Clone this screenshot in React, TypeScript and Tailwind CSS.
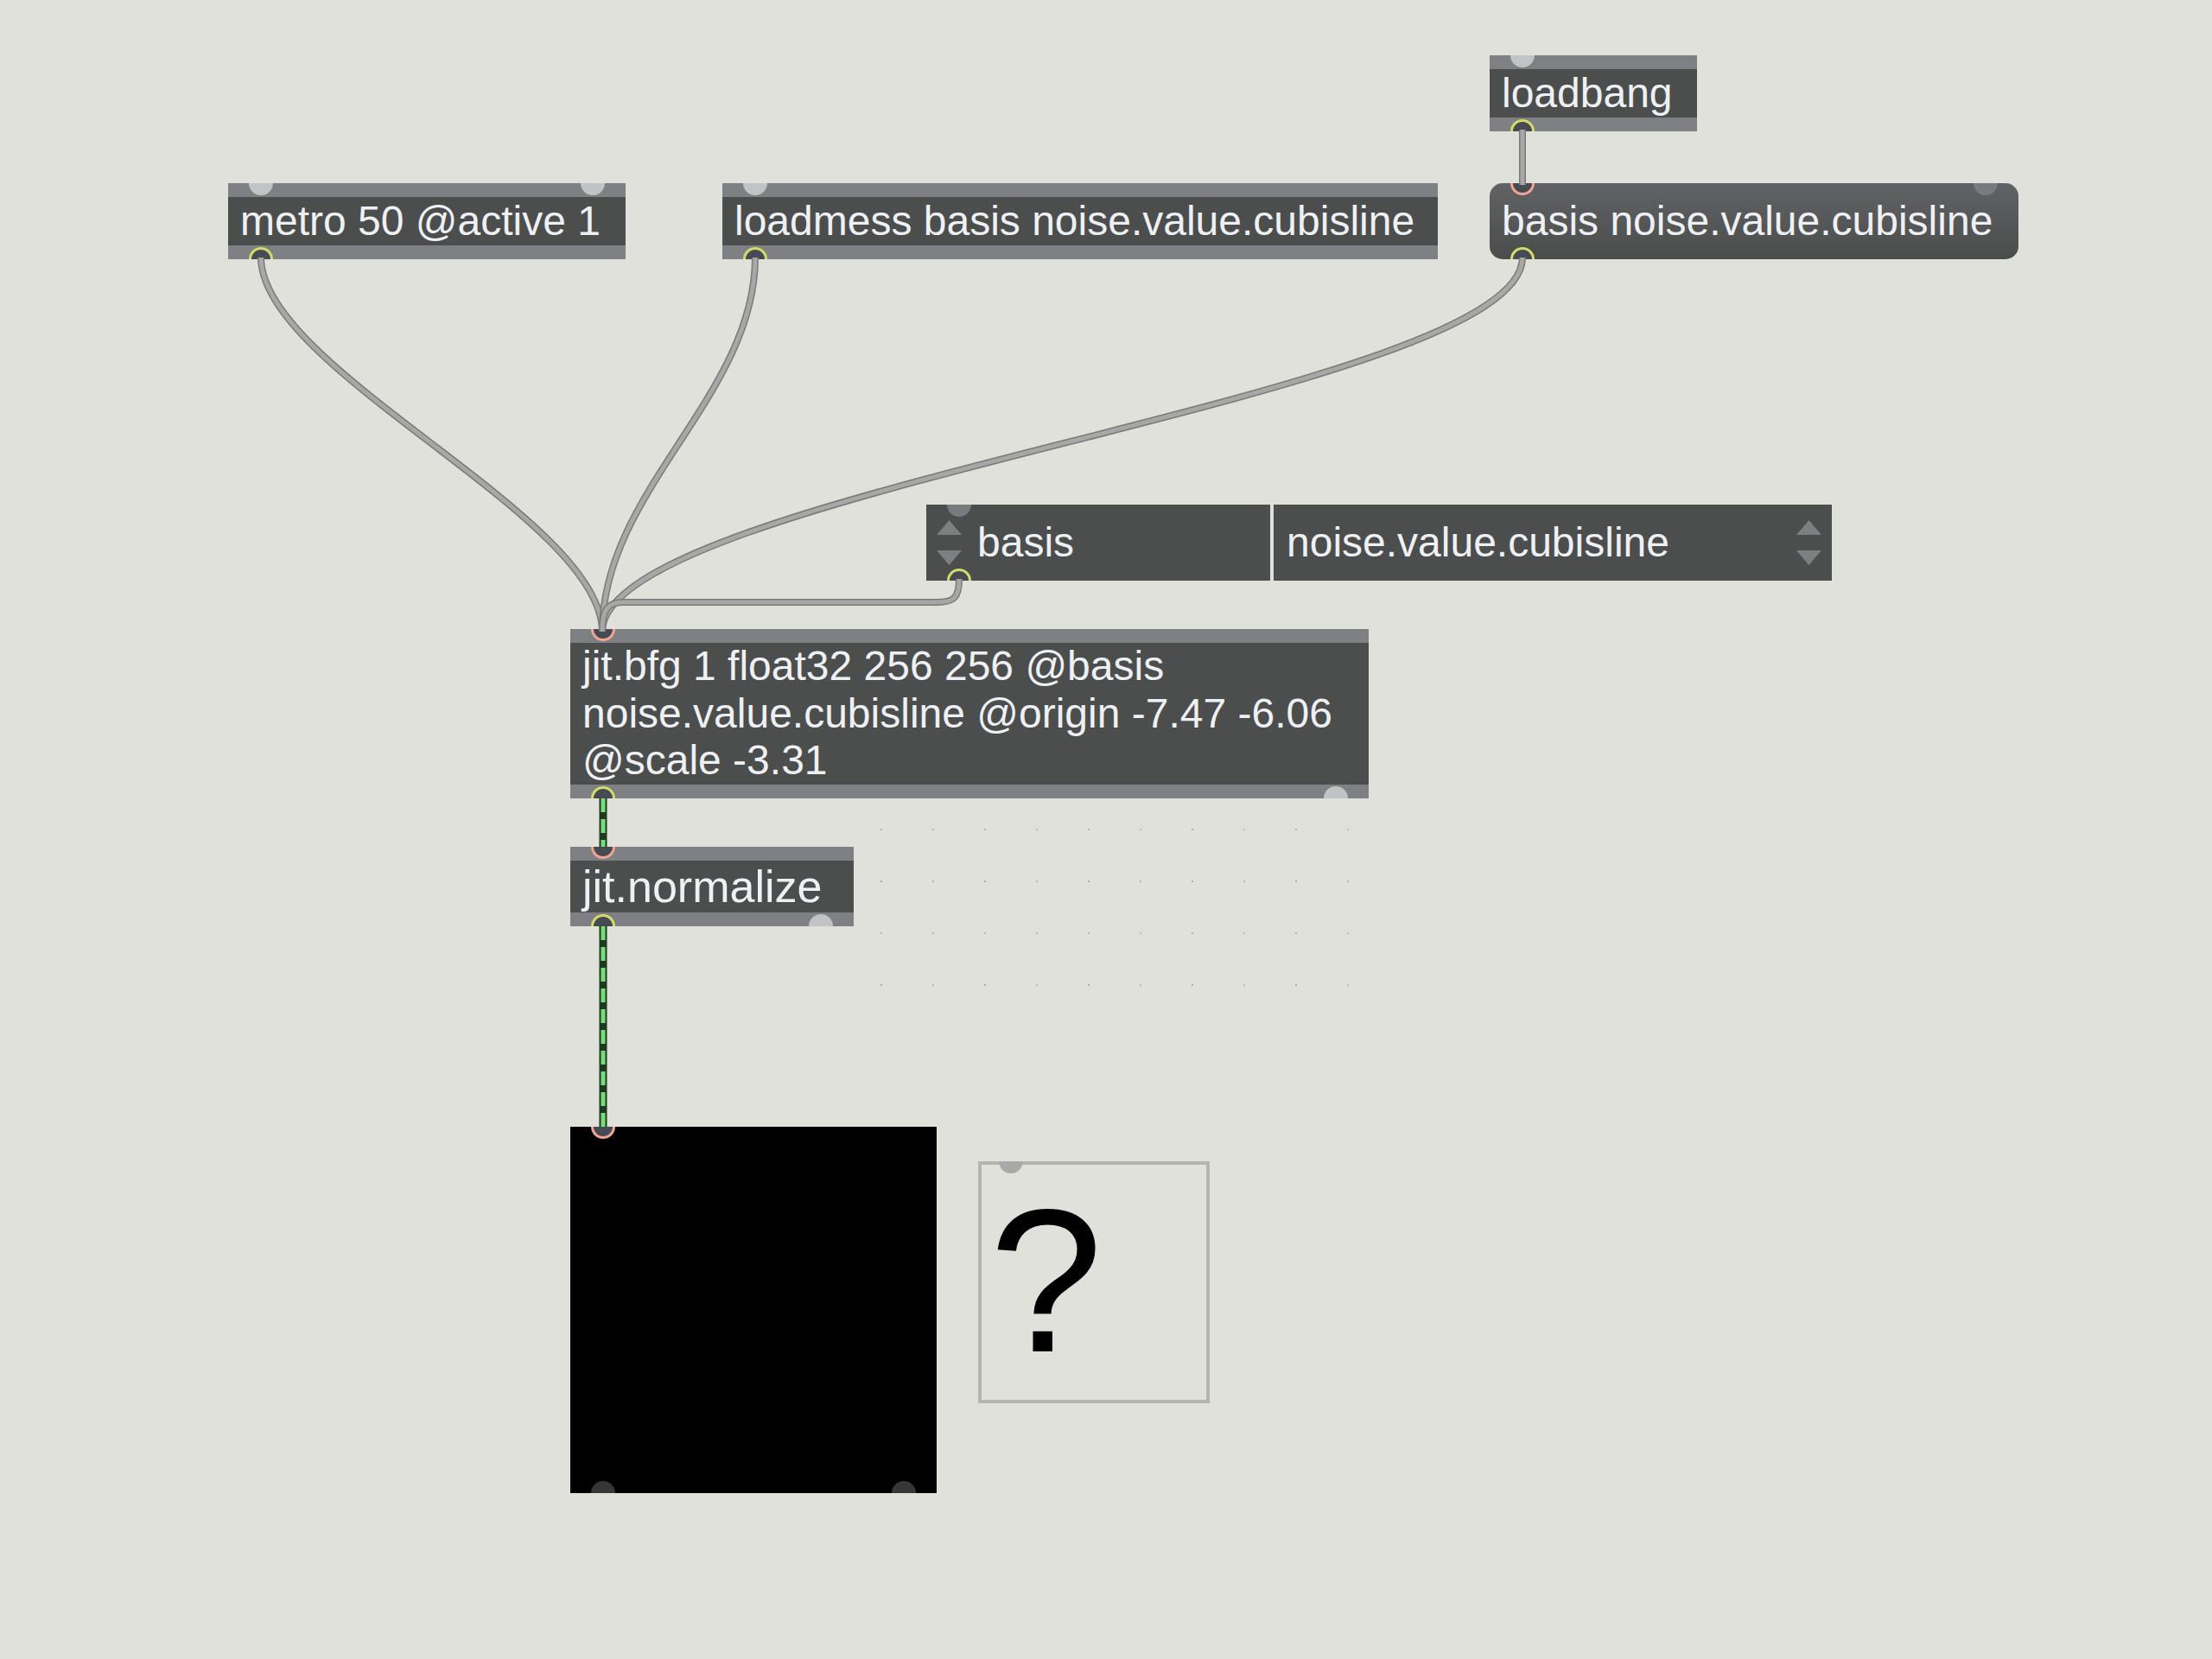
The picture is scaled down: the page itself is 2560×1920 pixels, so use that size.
import React from 'react';

type PortKind = 'idle' | 'in' | 'out' | 'dim' | 'dark';

const portClass: Record<PortKind, string> = {
  idle: 'bg-[#c2c3c5]',
  in: 'bg-[#464a52] border-[3px] border-[#f2a493]',
  out: 'bg-[#464a52] border-[3px] border-[#d3dc6b]',
  dim: 'bg-[#797a7d]',
  dark: 'bg-[#363636]',
};

const Port = ({ kind, pos }: { kind: PortKind; pos: string }) => (
  <div className={`absolute w-[28px] h-[28px] rounded-full ${portClass[kind]} ${pos}`} />
);

const TOP_L = 'top-[-14px] left-[24px]';
const TOP_R = 'top-[-14px] right-[24px]';
const BOT_L = 'bottom-[-14px] left-[24px]';
const BOT_R = 'bottom-[-14px] right-[24px]';

const font = "font-['Liberation_Sans',Arial,sans-serif]";

interface BoxProps {
  place: string;
  text?: string;
  children: React.ReactNode;
  ports: { kind: PortKind; pos: string }[];
}

// plain object box: light bars top and bottom, dark body
const ObjectBox = ({ place, text = 'text-[48px] leading-[56px]', children, ports }: BoxProps) => (
  <div className={`absolute flex flex-col overflow-hidden ${place}`}>
    <div className="h-[16px] shrink-0 bg-[#7f8084]" />
    <div className={`flex flex-1 flex-col justify-center bg-[#4b4e4d] pl-[14px] whitespace-nowrap text-[#eef0f4] ${text} ${font}`}>
      {children}
    </div>
    <div className="h-[16px] shrink-0 bg-[#7f8084]" />
    {ports.map((p, i) => (
      <Port key={i} kind={p.kind} pos={p.pos} />
    ))}
  </div>
);

const Arrows = () => (
  <svg width="29" height="52" viewBox="0 0 29 52" className="shrink-0">
    <polygon points="14.5,0 29,17 0,17" fill="#7e7f83" />
    <polygon points="0,35 29,35 14.5,52" fill="#7e7f83" />
  </svg>
);

const Cord = ({ d }: { d: string }) => (
  <g fill="none">
    <path d={d} stroke="#7a7b79" strokeWidth={8} />
    <path d={d} stroke="#a7a8a6" strokeWidth={5} />
  </g>
);

const MatrixCord = ({ d }: { d: string }) => (
  <g fill="none">
    <path d={d} stroke="#1c3a1e" strokeWidth={9} />
    <path d={d} stroke="#76dd78" strokeWidth={5} strokeDasharray="16 8" />
  </g>
);

const dotXs = Array.from({ length: 10 }, (_, i) => 1020 + i * 60);
const dotYs = [960, 1020, 1080, 1140];

export default function App() {
  return (
    <div className="relative w-[2560px] h-[1920px] overflow-hidden bg-[#e0e1db]">
      {/* faint grid dots */}
      <svg className="absolute left-0 top-0" width="2560" height="1920">
        {dotYs.map(y =>
          dotXs.map(x => <rect key={`${x}-${y}`} x={x - 1} y={y - 1} width={2} height={2} fill="#b3b4b0" />)
        )}
      </svg>

      <ObjectBox place="left-[1724px] top-[64px] w-[240px] h-[88px]" ports={[{ kind: 'idle', pos: TOP_L }, { kind: 'out', pos: BOT_L }]}>
        loadbang
      </ObjectBox>

      <ObjectBox
        place="left-[264px] top-[212px] w-[460px] h-[88px]"
        ports={[{ kind: 'idle', pos: TOP_L }, { kind: 'idle', pos: TOP_R }, { kind: 'out', pos: BOT_L }]}
      >
        metro 50 @active 1
      </ObjectBox>

      <ObjectBox place="left-[836px] top-[212px] w-[828px] h-[88px]" ports={[{ kind: 'idle', pos: TOP_L }, { kind: 'out', pos: BOT_L }]}>
        loadmess basis noise.value.cubisline
      </ObjectBox>

      {/* message box */}
      <div className="absolute left-[1724px] top-[212px] w-[612px] h-[88px] overflow-hidden rounded-[15px] bg-gradient-to-b from-[#616265] to-[#4b4d4c]">
        <div className={`flex h-full items-center pl-[14px] whitespace-nowrap text-[48px] leading-[56px] text-[#eef0f4] ${font}`}>
          basis noise.value.cubisline
        </div>
        <Port kind="in" pos={TOP_L} />
        <Port kind="dim" pos={TOP_R} />
        <Port kind="out" pos={BOT_L} />
      </div>

      {/* attrui */}
      <div className={`absolute left-[1072px] top-[584px] w-[1048px] h-[88px] flex overflow-hidden bg-[#4b4e4d] whitespace-nowrap text-[48px] leading-[56px] text-[#eef0f4] ${font}`}>
        <div className="flex w-[398px] shrink-0 items-center pl-[12px]">
          <Arrows />
          <span className="ml-[18px]">basis</span>
        </div>
        <div className="w-[4px] shrink-0 bg-[#e0e1db]" />
        <div className="flex flex-1 items-center justify-between pl-[15px] pr-[12px]">
          <span>noise.value.cubisline</span>
          <Arrows />
        </div>
        <Port kind="dim" pos={TOP_L} />
        <Port kind="out" pos={BOT_L} />
      </div>

      <ObjectBox
        place="left-[660px] top-[728px] w-[924px] h-[196px]"
        ports={[{ kind: 'in', pos: TOP_L }, { kind: 'out', pos: BOT_L }, { kind: 'idle', pos: BOT_R }]}
      >
        <div className="leading-[54.67px]">jit.bfg 1 float32 256 256 @basis</div>
        <div className="leading-[54.67px]">noise.value.cubisline @origin -7.47 -6.06</div>
        <div className="leading-[54.67px]">@scale -3.31</div>
      </ObjectBox>

      <ObjectBox
        place="left-[660px] top-[980px] w-[328px] h-[92px]"
        text="text-[52px] leading-[60px]"
        ports={[{ kind: 'in', pos: TOP_L }, { kind: 'out', pos: BOT_L }, { kind: 'idle', pos: BOT_R }]}
      >
        jit.normalize
      </ObjectBox>

      {/* jit.pwindow */}
      <div className="absolute left-[660px] top-[1304px] w-[424px] h-[424px] overflow-hidden bg-black">
        <Port kind="in" pos={TOP_L} />
        <Port kind="dark" pos={BOT_L} />
        <Port kind="dark" pos={BOT_R} />
      </div>

      {/* missing picture */}
      <div className="absolute left-[1132px] top-[1344px] w-[268px] h-[280px] border-[4px] border-[#b4b5b0]">
        <div className="absolute left-[20px] top-[-4px] w-[28px] h-[14px] rounded-b-full bg-[#a9aaa7]" />
        <div className={`pl-[9px] pt-[16px] text-[236px] leading-[236px] text-black ${font}`}>?</div>
      </div>

      {/* patch cords */}
      <svg className="pointer-events-none absolute left-0 top-0" width="2560" height="1920">
        <Cord d="M1762 150 L1762 214" />
        <Cord d="M302 298 C302 428, 697 598, 697 731" />
        <Cord d="M874 298 C874 458, 697 568, 697 731" />
        <Cord d="M1762 298 C1762 458, 697 568, 697 731" />
        <Cord d="M1110 670 C1110 692, 1104 697, 1084 697 L722 697 C704 697, 697 704, 697 731" />
        <MatrixCord d="M698 924 L698 980" />
        <MatrixCord d="M698 1072 L698 1304" />
      </svg>
    </div>
  );
}
